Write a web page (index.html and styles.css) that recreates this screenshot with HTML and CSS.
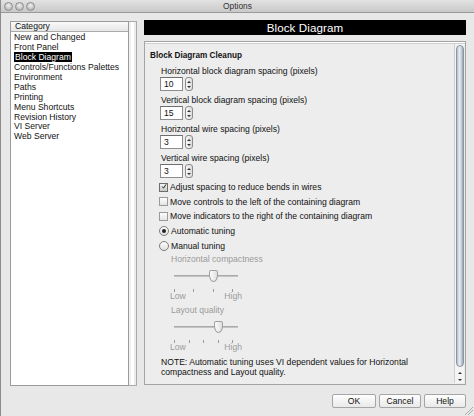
FILE: index.html
```html
<!DOCTYPE html>
<html>
<head>
<meta charset="utf-8">
<title>Options</title>
<link rel="stylesheet" href="styles.css">
</head>
<body>
<div class="window">
  <div class="titlebar">
    <div class="lights"><span></span><span></span><span></span></div>
    <div class="title">Options</div>
  </div>
  <div class="body">
    <div class="sidebar">
      <div class="list">
        <div class="list-head">Category</div>
        <div class="item">New and Changed</div>
        <div class="item">Front Panel</div>
        <div class="item"><span class="sel">Block Diagram</span></div>
        <div class="item">Controls/Functions Palettes</div>
        <div class="item">Environment</div>
        <div class="item">Paths</div>
        <div class="item">Printing</div>
        <div class="item">Menu Shortcuts</div>
        <div class="item">Revision History</div>
        <div class="item">VI Server</div>
        <div class="item">Web Server</div>
      </div>
      <div class="list-scroll"></div>
    </div>
    <div class="main">
      <div class="header">Block Diagram</div>
      <div class="panel">
        <div class="panel-inner">
          <div class="heading">Block Diagram Cleanup</div>
          <div class="field-group">
            <div class="label">Horizontal block diagram spacing (pixels)</div>
            <div class="num-row"><div class="num">10</div><div class="spin"><i class="up"></i><i class="dn"></i></div></div>
          </div>
          <div class="field-group">
            <div class="label">Vertical block diagram spacing (pixels)</div>
            <div class="num-row"><div class="num">15</div><div class="spin"><i class="up"></i><i class="dn"></i></div></div>
          </div>
          <div class="field-group">
            <div class="label">Horizontal wire spacing (pixels)</div>
            <div class="num-row"><div class="num">3</div><div class="spin"><i class="up"></i><i class="dn"></i></div></div>
          </div>
          <div class="field-group">
            <div class="label">Vertical wire spacing (pixels)</div>
            <div class="num-row"><div class="num">3</div><div class="spin"><i class="up"></i><i class="dn"></i></div></div>
          </div>
          <div class="checks">
            <div class="opt"><span class="cb checked"><svg viewBox="0 0 9 9" width="9" height="9"><path d="M1.8 4.6 L3.8 7 L7.6 1.2" fill="none" stroke="#222" stroke-width="1.5"/></svg></span>Adjust spacing to reduce bends in wires</div>
            <div class="opt"><span class="cb"></span>Move controls to the left of the containing diagram</div>
            <div class="opt"><span class="cb"></span>Move indicators to the right of the containing diagram</div>
            <div class="opt"><span class="radio on"></span>Automatic tuning</div>
            <div class="opt"><span class="radio"></span>Manual tuning</div>
          </div>
          <div class="tuning">
            <div class="dim-label">Horizontal compactness</div>
            <div class="slider"><div class="track"></div><div class="thumb" style="left:39px"></div></div>
            <div class="ticks"><i></i><i></i><i></i><i></i></div>
            <div class="range"><span>Low</span><span>High</span></div>
            <div class="dim-label second">Layout quality</div>
            <div class="slider"><div class="track"></div><div class="thumb" style="left:44px"></div></div>
            <div class="ticks"><i></i><i></i><i></i><i></i><i></i></div>
            <div class="range"><span>Low</span><span>High</span></div>
          </div>
          <div class="note">NOTE: Automatic tuning uses VI dependent values for Horizontal compactness and Layout quality.</div>
        </div>
        <div class="vscroll">
          <div class="vthumb"></div>
          <div class="arrows"><i class="up"></i><i class="dn"></i></div>
        </div>
      </div>
    </div>
  </div>
  <div class="footer">
    <button class="btn ok">OK</button>
    <button class="btn cancel">Cancel</button>
    <button class="btn help">Help</button>
  </div>
  <div class="grip"></div>
</div>
</body>
</html>
```
FILE: styles.css
```css
* { box-sizing: border-box; }
html, body { margin: 0; padding: 0; }
body {
  font-family: "Liberation Sans", Arial, sans-serif;
  font-size: 8.6px;
  color: #111;
  background: #e6e6e6;
}
.window {
  position: relative;
  width: 474px;
  height: 416px;
  background: #e8e8e8;
  border-left: 1px solid #8c8c8c;
  overflow: hidden;
}
.titlebar {
  height: 13px;
  background: linear-gradient(#e2e2e2, #c9c9c9);
  border-bottom: 1px solid #9a9a9a;
  display: flex;
  align-items: center;
  position: relative;
}
.lights { display: flex; gap: 2px; padding-left: 3px; }
.lights span {
  width: 9px; height: 9px; border-radius: 50%;
  background: radial-gradient(circle at 50% 35%, #f0f0f0, #a8a8a8);
  border: 1px solid #8e8e8e;
}
.title {
  position: absolute; left: 0; right: 0; top: 0;
  text-align: center; line-height: 13px; font-size: 8.4px; color: #333;
}
.body {
  display: flex;
  padding: 7px 0 0 9px;
  height: 374px;
}
.sidebar {
  display: flex;
  width: 127px;
  height: 365px;
  margin-top: 1px;
}
.list {
  width: 119px;
  background: #fff;
  border: 1px solid #9b9b9b;
}
.list-head {
  height: 10px;
  line-height: 9px;
  padding-left: 4px;
  background: linear-gradient(#fafafa, #e6e6e6);
  border-bottom: 1px solid #aaa;
}
.item {
  height: 9.95px;
  line-height: 10px;
  padding-left: 3px;
}
.sel {
  display: inline-block;
  background: #000;
  color: #fff;
  padding: 0 1px;
  line-height: 10px;
}
.list-scroll {
  width: 8px;
  background: #fff;
  border: 1px solid #aaa;
  border-left: none;
  box-shadow: inset 2px 0 0 #f0f0f0, inset -2px 0 0 #ececec;
}
.main {
  margin-left: 7px;
  width: 322px;
}
.header {
  height: 15px;
  background: #000;
  color: #fff;
  text-align: center;
  font-size: 11.6px;
  line-height: 15px;
  letter-spacing: 0.1px;
}
.panel {
  margin-top: 6px;
  height: 344px;
  border: 1px solid #a4a4a4;
  background: #ededed;
  display: flex;
  box-shadow: inset 0 1px 0 #fff, inset 0 2px 0 #cfcfcf;
}
.panel-inner {
  flex: 1;
  padding: 9px 0 0 5px;
}
.heading {
  font-weight: bold;
  line-height: 10px;
  font-size: 8.2px;
}
.field-group { padding-left: 11px; }
.heading + .field-group { margin-top: 5px; }
.label { line-height: 10px; }
.num-row {
  display: flex;
  align-items: center;
  margin-top: 1px;
  margin-left: -1px;
  margin-bottom: 4px;
  gap: 2px;
}
.num {
  width: 23px; height: 14px;
  background: #fff;
  border: 1px solid #8d8d8d;
  border-top-color: #6e6e6e;
  line-height: 12px;
  padding-left: 3px;
}
.spin {
  width: 8px; height: 14px;
  border: 1px solid #8a8a8a;
  border-radius: 3px;
  background: linear-gradient(90deg, #f8f8f8, #dcdcdc);
  display: flex; flex-direction: column; align-items: center; justify-content: space-around;
  padding: 1px 0;
}
.spin i, .arrows i {
  display: block; width: 0; height: 0;
  border-left: 2px solid transparent; border-right: 2px solid transparent;
}
.spin i.up, .arrows i.up { border-bottom: 2.5px solid #333; }
.spin i.dn, .arrows i.dn { border-top: 2.5px solid #333; }
.checks { margin-top: -2px; padding-left: 9px; }
.opt {
  height: 14.6px;
  display: flex;
  align-items: center;
}
.cb {
  width: 9px; height: 9px;
  border: 1px solid #9a9a9a;
  background: linear-gradient(#fdfdfd, #e4e4e4);
  margin-right: 2px;
  display: flex; align-items: center; justify-content: center;
}
.cb.checked { border-color: #6d6d6d; background: linear-gradient(#f5f5f5, #c8c8c8); }
.cb svg { display: block; margin-top: -1px; margin-left: 1px; }
.radio {
  width: 10px; height: 10px;
  border-radius: 50%;
  border: 1px solid #7e7e7e;
  background: linear-gradient(#fdfdfd, #e0e0e0);
  margin-right: 2px;
  display: flex; align-items: center; justify-content: center;
}
.radio.on::after {
  content: ""; width: 4px; height: 4px; border-radius: 50%; background: #222;
}
.tuning { padding-left: 21px; color: #9b9b9b; margin-top: 1px; }
.dim-label { line-height: 10px; }
.dim-label.second { margin-top: 4px; }
.slider {
  position: relative;
  margin-top: 5px;
  margin-left: 3px;
  width: 64px;
  height: 14px;
}
.track {
  position: absolute; left: 0; right: 0; top: 6px;
  height: 2px; background: #c4c4c4; border-top: 1px solid #aaa;
}
.thumb {
  position: absolute; top: 1px;
  width: 9px; height: 12px;
  margin-left: -4px;
  background: linear-gradient(90deg, #fbfbfb, #e0e0e0);
  border: 1px solid #a0a0a0;
  border-radius: 2px 2px 50% 50% / 2px 2px 60% 60%;
}
.ticks {
  display: flex; justify-content: space-between;
  width: 59px; margin-left: 3px; margin-top: 6px; height: 3px;
}
.ticks i { display: block; width: 1px; height: 3px; background: #9a9a9a; }
.range {
  display: flex; justify-content: space-between;
  width: 72px; margin-left: -1px; line-height: 10px; margin-top: -1px;
}
.note {
  margin-top: 5px;
  padding-left: 11px;
  line-height: 10px;
  width: 300px;
}
.vscroll {
  width: 10px;
  margin: 2px 1px 1px 0;
  display: flex; flex-direction: column; align-items: center;
  background: #f4f4f4;
  border-left: 1px solid #d0d0d0;
}
.vthumb {
  width: 8px;
  height: 322px;
  margin-top: 1px;
  border-radius: 4px;
  background: linear-gradient(90deg, #b4bcc6, #e8edf3 40%, #c9d2dc 70%, #9aa5b2);
  border: 1px solid #8c96a2;
}
.arrows {
  margin-top: 5px;
  display: flex; flex-direction: column; align-items: center; gap: 5px;
}
.footer {
  display: flex;
  justify-content: flex-end;
  gap: 3px;
  padding-right: 8px;
  margin-top: 7px;
}
.btn {
  font-family: inherit;
  font-size: 8.6px;
  height: 14px;
  padding: 0;
  background: linear-gradient(#fefefe, #e9e9e9);
  border: 1px solid #a5a5a5;
  border-radius: 2px;
  color: #111;
}
.btn.ok { width: 44px; }
.btn.cancel { width: 42px; }
.btn.help { width: 42px; }
.grip {
  position: absolute; right: 1px; bottom: 1px;
  width: 8px; height: 8px;
  background: linear-gradient(135deg, transparent 45%, #aaa 45%, #aaa 52%, transparent 52%, transparent 68%, #aaa 68%, #aaa 75%, transparent 75%);
}
```
